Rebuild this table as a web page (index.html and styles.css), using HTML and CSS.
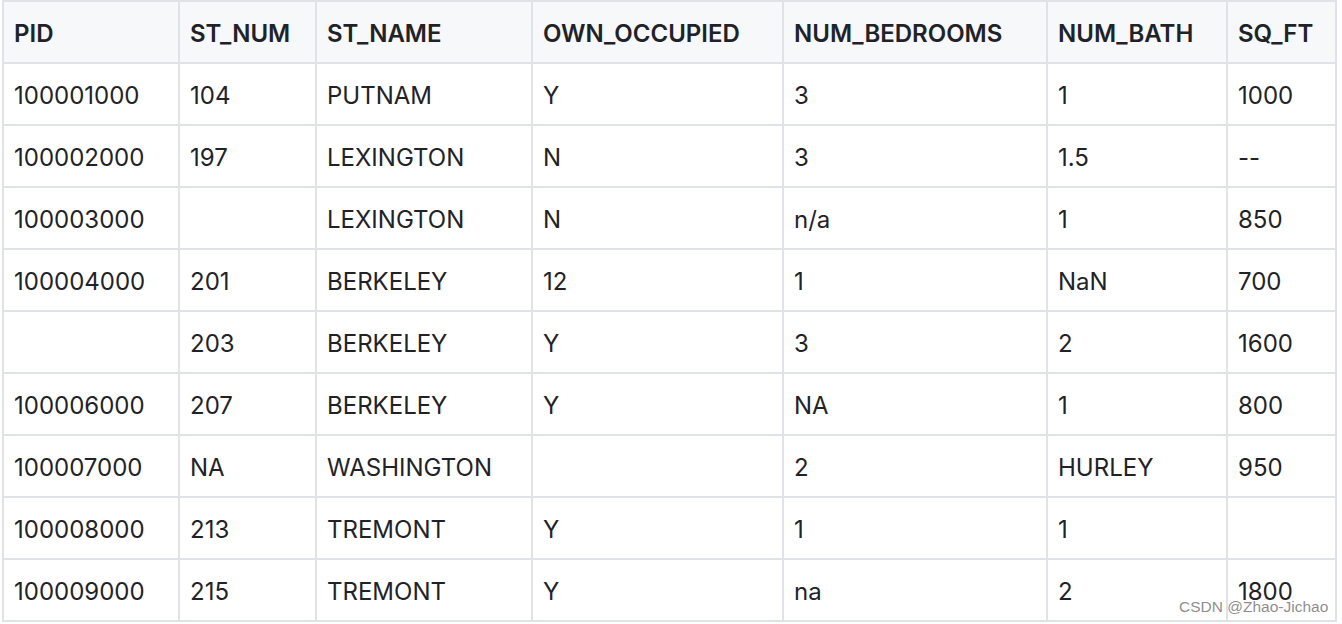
FILE: index.html
```html
<!DOCTYPE html>
<html>
<head>
<meta charset="utf-8">
<link rel="stylesheet" href="styles.css">
</head>
<body>
<div class="wrap">
  <div class="grid">
    <div class="c h">PID</div><div class="c h">ST_NUM</div><div class="c h">ST_NAME</div><div class="c h">OWN_OCCUPIED</div><div class="c h">NUM_BEDROOMS</div><div class="c h">NUM_BATH</div><div class="c h">SQ_FT</div>
    <div class="c">100001000</div><div class="c">104</div><div class="c">PUTNAM</div><div class="c">Y</div><div class="c">3</div><div class="c">1</div><div class="c">1000</div>
    <div class="c">100002000</div><div class="c">197</div><div class="c">LEXINGTON</div><div class="c">N</div><div class="c">3</div><div class="c">1.5</div><div class="c">--</div>
    <div class="c">100003000</div><div class="c"></div><div class="c">LEXINGTON</div><div class="c">N</div><div class="c">n/a</div><div class="c">1</div><div class="c">850</div>
    <div class="c">100004000</div><div class="c">201</div><div class="c">BERKELEY</div><div class="c">12</div><div class="c">1</div><div class="c">NaN</div><div class="c">700</div>
    <div class="c"></div><div class="c">203</div><div class="c">BERKELEY</div><div class="c">Y</div><div class="c">3</div><div class="c">2</div><div class="c">1600</div>
    <div class="c">100006000</div><div class="c">207</div><div class="c">BERKELEY</div><div class="c">Y</div><div class="c">NA</div><div class="c">1</div><div class="c">800</div>
    <div class="c">100007000</div><div class="c">NA</div><div class="c">WASHINGTON</div><div class="c"></div><div class="c">2</div><div class="c">HURLEY</div><div class="c">950</div>
    <div class="c">100008000</div><div class="c">213</div><div class="c">TREMONT</div><div class="c">Y</div><div class="c">1</div><div class="c">1</div><div class="c"></div>
    <div class="c">100009000</div><div class="c">215</div><div class="c">TREMONT</div><div class="c">Y</div><div class="c">na</div><div class="c">2</div><div class="c">1800</div>
  </div>
  <div class="mark">CSDN @Zhao-Jichao</div>
</div>
</body>
</html>
```
FILE: styles.css
```css
html, body {
  margin: 0;
  padding: 0;
  background: #ffffff;
}
body {
  padding: 0 0 0 2px;
  font-family: Inter, "Noto Sans", "Liberation Sans", sans-serif;
  color: #1f2328;
}
.wrap {
  position: relative;
  width: 1335px;
}
.grid {
  display: grid;
  grid-template-columns: 176px 137px 216px 251px 264px 180px 109px;
  grid-auto-rows: 62px;
  border-left: 2px solid #dfe2e6;
  border-top: 2px solid #dfe2e6;
  width: 1333px;
}
.c {
  box-sizing: border-box;
  border-right: 2px solid #dfe2e6;
  border-bottom: 2px solid #dfe2e6;
  padding: 2px 10px 0 10px;
  display: flex;
  align-items: center;
  font-size: 24px;
  white-space: nowrap;
  overflow: visible;
}
.h {
  background: #f6f8fa;
  font-weight: 600;
}
.mark {
  position: absolute;
  left: 1177px;
  top: 598px;
  font-family: "Liberation Sans", Arial, sans-serif;
  font-size: 15.5px;
  color: rgba(120, 120, 120, 0.85);
}
```
